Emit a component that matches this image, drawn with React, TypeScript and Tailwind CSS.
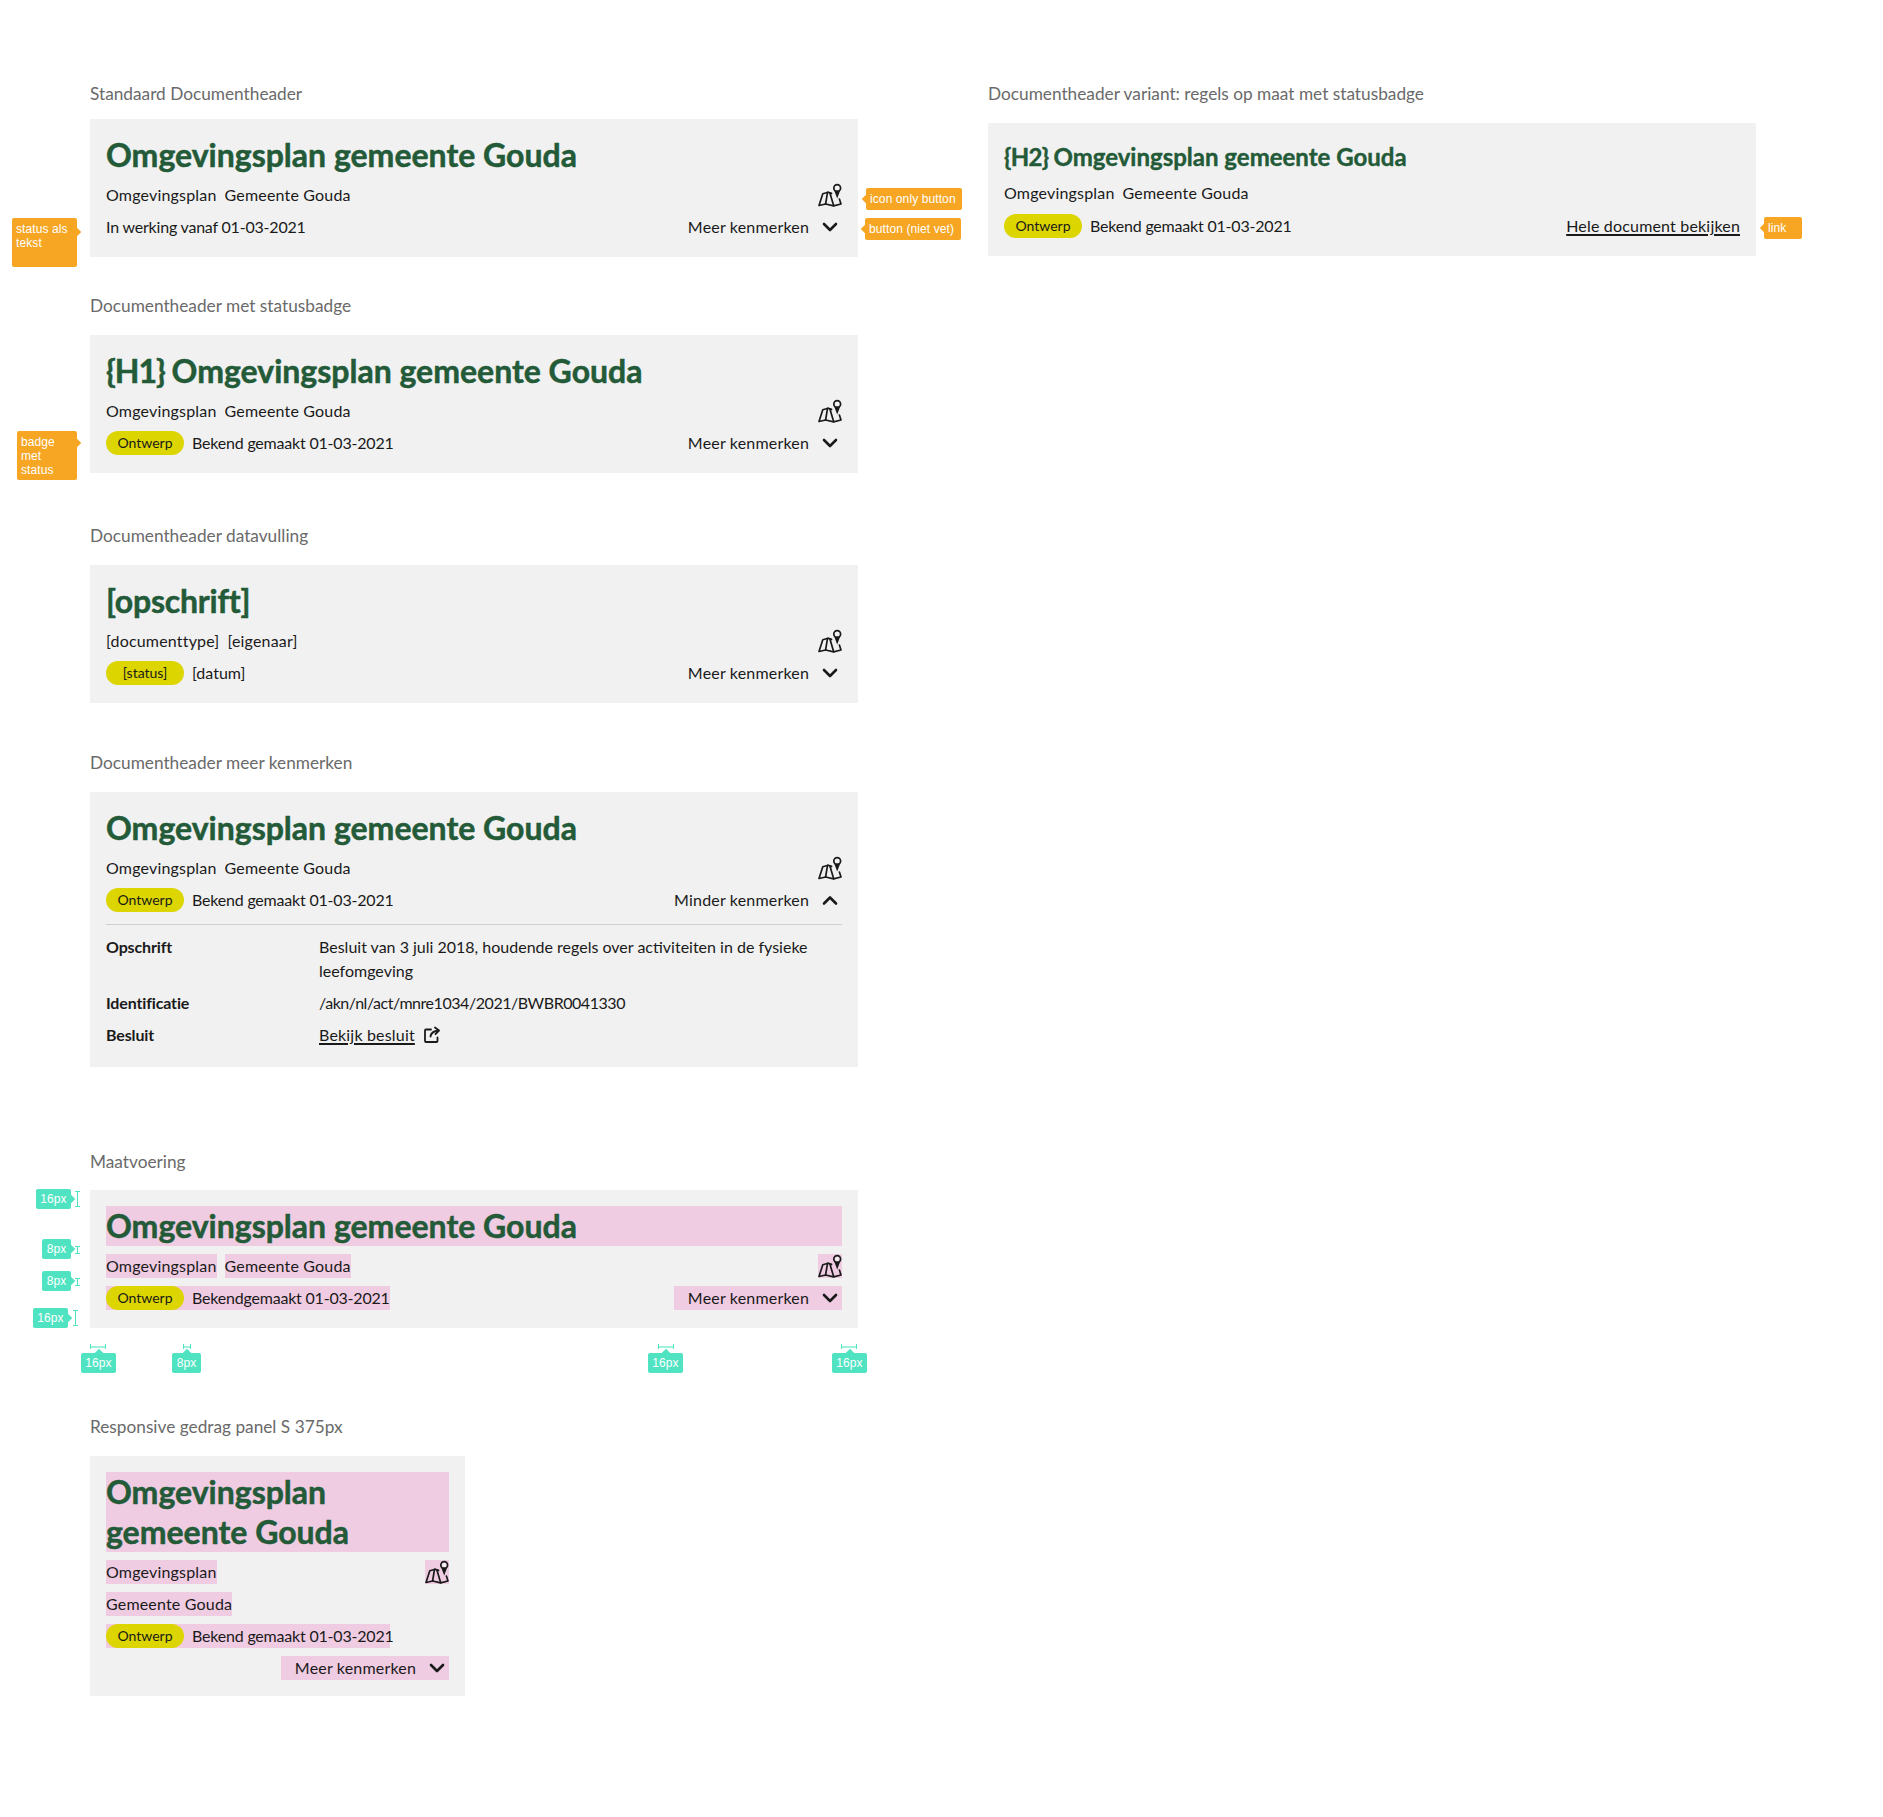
import React from "react";

const MapIcon = () => (
  <svg width="24" height="24" viewBox="0 0 24 24" fill="none" stroke="#1a1a1a" strokeWidth="1.7" strokeLinejoin="round" strokeLinecap="round">
    <circle cx="19.2" cy="5" r="3.4" />
    <path d="M16.2 7.5 19.2 15.5 22.2 7.500Z" fill="#1a1a1a" stroke="none" />
    <circle cx="19.2" cy="5" r="1.9" fill="#f1f1f1" stroke="none" />
    <path d="M13.5 10.400 10.200 9.200 4.800 10.800 1 22.500l6.600-1.500 8 1.800 7.400-1.800-1.600-5" />
    <path d="M9.500 9.400 7.600 21M12 10.200l3.600 12.400" />
  </svg>
);

const Chevron = ({ up }: { up?: boolean }) => (
  <svg width="24" height="24" viewBox="0 0 24 24" fill="none" stroke="#1a1a1a" strokeWidth="2.6" strokeLinecap="round" strokeLinejoin="round">
    {up ? <path d="M6 15.500 12 9.500l6 6" /> : <path d="M6 9l6 6 6-6" />}
  </svg>
);

const External = () => (
  <svg width="18" height="18" viewBox="0 0 18 18" fill="none" stroke="#1a1a1a" strokeWidth="1.8" strokeLinecap="round" strokeLinejoin="round">
    <path d="M8 3.500H3a1 1 0 0 0-1 1V15a1 1 0 0 0 1 1h10.500a1 1 0 0 0 1-1v-3.500" />
    <path d="M7.500 10.500c.5-3.500 3-5.500 8-6" />
    <path d="M12 1.500l4 3-3.500 3.500" />
  </svg>
);

const Badge = ({ children = "Ontwerp" }: { children?: React.ReactNode }) => (
  <span className="inline-flex h-6 w-[78px] shrink-0 items-center justify-center rounded-full bg-[#dcd500] text-[14px] leading-6 text-[#1a1a1a]">
    {children}
  </span>
);

const Label = ({ children, className = "" }: { children: React.ReactNode; className?: string }) => (
  <div className={`h-[30px] text-[17.25px] leading-[30px] text-[#6a6a6a] ${className}`}>{children}</div>
);

const Dated = ({ children }: { children: React.ReactNode }) => (
  <span className="whitespace-nowrap tracking-[-0.2px]">{children}</span>
);

type CardProps = {
  title?: React.ReactNode;
  meta?: [string, string];
  left: React.ReactNode;
  button?: string;
  up?: boolean;
  pink?: boolean;
};

const P = ({ on, className = "", children }: { on?: boolean; className?: string; children: React.ReactNode }) => (
  <span className={`${on ? "bg-[#efcce2]" : ""} ${className}`}>{children}</span>
);

const Card = ({ title = "Omgevingsplan gemeente Gouda", meta = ["Omgevingsplan", "Gemeente Gouda"], left, button = "Meer kenmerken", up, pink }: CardProps) => (
  <div className="flex flex-col gap-2 px-4 pt-4 pb-[18px]">
    <h1 className={`h-10 text-[32px] font-bold leading-10 text-[#235a38] [-webkit-text-stroke:0.5px_#235a38] ${pink ? "bg-[#efcce2]" : ""}`}>{title}</h1>
    <div className="flex h-6 items-center justify-between">
      <div className="flex gap-2 leading-6 tracking-[0.18px]">
        <P on={pink}>{meta[0]}</P>
        <P on={pink}>{meta[1]}</P>
      </div>
      <P on={pink} className="h-6 w-6"><MapIcon /></P>
    </div>
    <div className="flex h-6 items-center justify-between">
      <div className={`flex items-center gap-2 leading-6 ${pink ? "bg-[#efcce2]" : ""}`}>{left}</div>
      <div className={`flex h-6 items-center gap-[9px] pl-[14px] ${pink ? "bg-[#efcce2]" : ""}`}>
        <span className="text-[16px] leading-6 tracking-[0.18px]">{button}</span>
        <Chevron up={up} />
      </div>
    </div>
  </div>
);

const Tip = ({ x, y, w, h, color, side, tipY, tipX, lines }: { x: number; y: number; w: number; h: number; color: "o" | "t"; side: "l" | "r" | "t"; tipY?: number; tipX?: number; lines: string[] }) => {
  const bg = color === "o" ? "bg-[#f6a623]" : "bg-[#50e3c2]";
  const arrow =
    side === "r" ? "-right-[3px]" : side === "l" ? "-left-[3px]" : "-top-[3px]";
  return (
    <div
      className={`absolute rounded-[2px] px-[4px] font-['Liberation_Sans',sans-serif] text-[12px] leading-[14px] tracking-[0.1px] text-white ${bg} ${side === "t" || color === "t" ? "pt-[3px] text-center" : "pt-[4px]"}`}
      style={{ left: x, top: y, width: w, height: h }}
    >
      {lines.map((l) => (
        <div key={l}>{l}</div>
      ))}
      <span
        className={`absolute h-[6px] w-[6px] rotate-45 ${bg} ${arrow}`}
        style={side === "t" ? { left: (tipX ?? w / 2) - 3 } : { top: (tipY ?? h / 2) - 3 }}
      />
    </div>
  );
};

const VBracket = ({ x, y, h }: { x: number; y: number; h: number }) => (
  <div className="absolute w-[5px] border-y border-[#50e3c2]" style={{ left: x, top: y, height: h }}>
    <div className="mx-auto h-full w-px bg-[#50e3c2]" />
  </div>
);

const HBracket = ({ x, y, w }: { x: number; y: number; w: number }) => (
  <div className="absolute flex h-[5px] items-center border-x border-[#50e3c2]" style={{ left: x, top: y, width: w }}>
    <div className="h-[2px] w-full bg-[#9ff0dd]" />
  </div>
);

const Row = ({ k, children, className = "" }: { k: string; children: React.ReactNode; className?: string }) => (
  <div className={`flex leading-6 ${className}`}>
    <div className="w-[213px] shrink-0 font-bold tracking-[-0.15px]">{k}</div>
    <div className="flex-1">{children}</div>
  </div>
);

export default function App() {
  const date = "Bekend gemaakt 01-03-2021";
  return (
    <div className="relative h-[1817px] w-[1883px] bg-white font-['Lato',sans-serif] text-[16px] text-[#1a1a1a]">
      <div className="flex pl-[90px]">
        <main className="w-[768px] pt-[79px]">
          <Label>Standaard Documentheader</Label>
          <section className="mt-[10px] bg-[#f1f1f1]">
            <Card left={<Dated>In werking vanaf 01-03-2021</Dated>} />
          </section>

          <Label className="mt-[34px]">Documentheader met statusbadge</Label>
          <section className="mt-[14px] bg-[#f1f1f1]">
            <Card
              title={<><span className="tracking-[-1px]">{"{H1} "}</span>Omgevingsplan gemeente Gouda</>}
              left={<><Badge /><Dated>{date}</Dated></>}
            />
          </section>

          <Label className="mt-[48px]">Documentheader datavulling</Label>
          <section className="mt-[14px] bg-[#f1f1f1]">
            <Card
              title={<span className="tracking-[-0.2px]">[opschrift]</span>}
              meta={["[documenttype]", "[eigenaar]"]}
              left={<><Badge>[status]</Badge><span>[datum]</span></>}
            />
          </section>

          <Label className="mt-[45px]">Documentheader meer kenmerken</Label>
          <section className="mt-[14px] bg-[#f1f1f1] pb-[20px]">
            <Card up button="Minder kenmerken" left={<><Badge /><Dated>{date}</Dated></>} />
            <div className="mx-4 -mt-[6px] border-t border-[#cfcfcf] pt-[10px]">
              <Row k="Opschrift">Besluit van 3 juli 2018, houdende regels over activiteiten in de fysieke leefomgeving</Row>
              <Row k="Identificatie" className="mt-2"><span className="tracking-[-0.45px]">/akn/nl/act/mnre1034/2021/BWBR0041330</span></Row>
              <Row k="Besluit" className="mt-2">
                <span className="flex items-center gap-2">
                  <span className="tracking-[0.18px] underline decoration-[1.5px] underline-offset-2">Bekijk besluit</span>
                  <External />
                </span>
              </Row>
            </div>
          </section>

          <Label className="mt-[80px]">Maatvoering</Label>
          <section className="mt-[13px] bg-[#f1f1f1]">
            <Card pink left={<><Badge /><Dated>Bekendgemaakt 01-03-2021</Dated></>} />
          </section>

          <Label className="mt-[84px]">Responsive gedrag panel S 375px</Label>
          <section className="mt-[14px] flex w-[375px] flex-col gap-2 bg-[#f1f1f1] px-4 py-4">
            <h1 className="w-[343px] bg-[#efcce2] text-[32px] font-bold leading-10 text-[#235a38] [-webkit-text-stroke:0.5px_#235a38]">Omgevingsplan gemeente Gouda</h1>
            <div className="flex h-6 items-center justify-between leading-6 tracking-[0.18px]">
              <P on>Omgevingsplan</P>
              <P on className="h-6 w-6"><MapIcon /></P>
            </div>
            <div className="flex h-6 leading-6 tracking-[0.18px]"><P on>Gemeente Gouda</P></div>
            <div className="flex h-6"><div className="flex w-[284px] items-center gap-2 bg-[#efcce2] leading-6"><Badge /><Dated>{date}</Dated></div></div>
            <div className="flex h-6 justify-end">
              <div className="flex h-6 items-center gap-[9px] bg-[#efcce2] pl-[14px]">
                <span className="leading-6 tracking-[0.18px]">Meer kenmerken</span>
                <Chevron />
              </div>
            </div>
          </section>
        </main>

        <aside className="ml-[130px] w-[768px] pt-[79px]">
          <Label>Documentheader variant: regels op maat met statusbadge</Label>
          <section className="mt-[14px] flex flex-col bg-[#f1f1f1] px-4 pt-[18px] pb-[18px]">
            <h2 className="text-[24px] font-bold leading-8 text-[#235a38] [-webkit-text-stroke:0.4px_#235a38]"><span className="tracking-[-0.7px]">{"{H2} "}</span>Omgevingsplan gemeente Gouda</h2>
            <div className="mt-2 flex gap-2 leading-6 tracking-[0.18px]"><span>Omgevingsplan</span><span>Gemeente Gouda</span></div>
            <div className="mt-[9px] flex h-6 items-center justify-between">
              <div className="flex items-center gap-2 leading-6"><Badge /><Dated>{date}</Dated></div>
              <a className="tracking-[0.18px] underline decoration-[1.5px] underline-offset-2">Hele document bekijken</a>
            </div>
          </section>
        </aside>
      </div>

      <Tip color="o" side="r" x={12} y={218} w={65} h={49} tipY={14} lines={["status als", "tekst"]} />
      <Tip color="o" side="l" x={866} y={188} w={96} h={22} lines={["icon only button"]} />
      <Tip color="o" side="l" x={865} y={218} w={96} h={22} lines={["button (niet vet)"]} />
      <Tip color="o" side="r" x={17} y={431} w={60} h={49} tipY={12} lines={["badge", "met", "status"]} />
      <Tip color="o" side="l" x={1764} y={217} w={38} h={22} lines={["link"]} />

      <Tip color="t" side="r" x={36} y={1189} w={35} h={20} lines={["16px"]} />
      <VBracket x={75} y={1191} h={16} />
      <Tip color="t" side="r" x={42} y={1239} w={29} h={20} lines={["8px"]} />
      <VBracket x={75} y={1246} h={8} />
      <Tip color="t" side="r" x={42} y={1271} w={29} h={20} lines={["8px"]} />
      <VBracket x={75} y={1278} h={8} />
      <Tip color="t" side="r" x={33} y={1308} w={35} h={20} lines={["16px"]} />
      <VBracket x={73} y={1310} h={16} />

      <HBracket x={90} y={1344} w={16} />
      <Tip color="t" side="t" x={81} y={1353} w={35} h={20} lines={["16px"]} />
      <HBracket x={183} y={1344} w={8} />
      <Tip color="t" side="t" x={172} y={1353} w={29} h={20} lines={["8px"]} />
      <HBracket x={658} y={1344} w={16} />
      <Tip color="t" side="t" x={648} y={1353} w={35} h={20} lines={["16px"]} />
      <HBracket x={841} y={1344} w={16} />
      <Tip color="t" side="t" x={832} y={1353} w={35} h={20} lines={["16px"]} />
    </div>
  );
}
